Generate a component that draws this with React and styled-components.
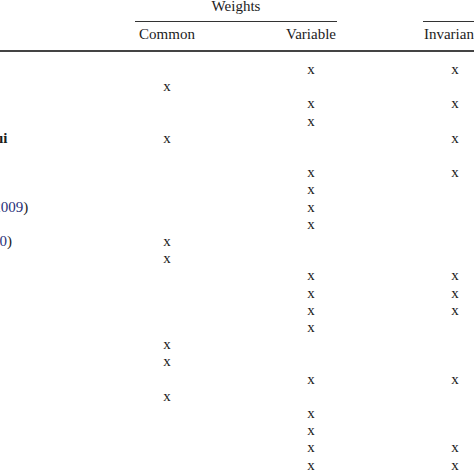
import React from 'react';
import styled, { createGlobalStyle, css } from 'styled-components';

const GlobalStyle = createGlobalStyle`
    html, body {
        margin: 0;
        padding: 0;
        background: #ffffff;
    }
    body {
        font-family: "Liberation Serif", "Times New Roman", serif;
        color: #1c1c1c;
    }
`;

// the picture is a crop of a wider table, so the frame clips it
const Frame = styled.div`
    width: 474px;
    height: 474px;
    overflow: hidden;
    background: #ffffff;
`;

const Table = styled.div`
    width: 746px;
    margin: -2px 0 0 -75px;
    font-size: 15px;
`;

const columns = css`
    display: grid;
    grid-template-columns: 170px repeat(4, 144px);
`;

const GroupRow = styled.div`
    ${columns}
`;

const GroupCell = styled.div`
    grid-column: ${p => p.$from} / span ${p => p.$span};
    margin: 0 46px 0 40px;
    padding-bottom: 6px;
    border-bottom: ${p => (p.$ruled ? '1px solid #333' : 'none')};
    line-height: 17px;
    text-align: center;
    white-space: nowrap;
`;

const HeadRow = styled.div`
    ${columns}
    border-bottom: 2px solid #444;
`;

const HeadCell = styled.div`
    padding: 4px ${p => p.$shift || 0}px 7px 0;
    line-height: 17px;
    text-align: ${p => (p.$left ? 'left' : 'center')};
    white-space: nowrap;
`;

const Body = styled.div`
    padding-top: 9px;
`;

const Row = styled.div`
    ${columns}
    line-height: 17.2px;
`;

const Label = styled.div`
    white-space: nowrap;
    font-weight: ${p => (p.$bold ? 700 : 400)};
`;

const Year = styled.span`
    color: #27307a;
`;

const Mark = styled.div`
    text-align: center;
    color: #1a1a1a;
`;

const rows = [
    { author: 'Ang', year: '2004', v: 1, i: 1 },
    { author: 'Fok', year: '2006', c: 1 },
    { author: 'Lo', year: '2001', v: 1, i: 1 },
    { author: 'Ma', year: '2003', v: 1 },
    { author: 'Kuo and Cui', bold: true, c: 1, i: 1 },
    { author: 'Hu', year: '2005' },
    { author: 'Li', year: '2007', v: 1, i: 1 },
    { author: 'Xu', year: '2008', v: 1 },
    { author: 'Kim et al.', year: '2009', v: 1 },
    { author: 'Yu', year: '2008', v: 1 },
    { author: 'Mullen', year: '2010', c: 1 },
    { author: 'Su', year: '2010', c: 1 },
    { author: 'Ng', year: '2011', v: 1, i: 1 },
    { author: 'Ho', year: '2011', v: 1, i: 1 },
    { author: 'Wu', year: '2012', v: 1, i: 1 },
    { author: 'Tan', year: '2012', v: 1 },
    { author: 'Ho', year: '2013', c: 1 },
    { author: 'Lin', year: '2013', c: 1 },
    { author: 'Ye', year: '2014', v: 1, i: 1 },
    { author: 'Ko', year: '2014', c: 1 },
    { author: 'Qi', year: '2015', v: 1 },
    { author: 'Lu', year: '2015', v: 1 },
    { author: 'Ji', year: '2016', v: 1, i: 1 },
    { author: 'Bo', year: '2016', v: 1, i: 1 },
];

const App = () => {
    return (
        <Frame>
            <GlobalStyle />
            <Table>
                <GroupRow>
                    <GroupCell $from={2} $span={2} $ruled>Weights</GroupCell>
                    <GroupCell $from={4} $span={2} $ruled>Parameters</GroupCell>
                </GroupRow>
                <HeadRow>
                    <HeadCell $left>Study</HeadCell>
                    <HeadCell>Common</HeadCell>
                    <HeadCell>Variable</HeadCell>
                    <HeadCell $shift={8}>Invariant</HeadCell>
                    <HeadCell>Time-varying</HeadCell>
                </HeadRow>
                <Body>
                    {rows.map((r, idx) => (
                        <Row key={idx}>
                            <Label $bold={r.bold}>
                                {r.author}
                                {r.year && (
                                    <>
                                        {' ('}
                                        <Year>{r.year}</Year>
                                        {')'}
                                    </>
                                )}
                            </Label>
                            <Mark>{r.c ? 'x' : ''}</Mark>
                            <Mark>{r.v ? 'x' : ''}</Mark>
                            <Mark>{r.i ? 'x' : ''}</Mark>
                            <Mark />
                        </Row>
                    ))}
                </Body>
            </Table>
        </Frame>
    );
};

export default App;
